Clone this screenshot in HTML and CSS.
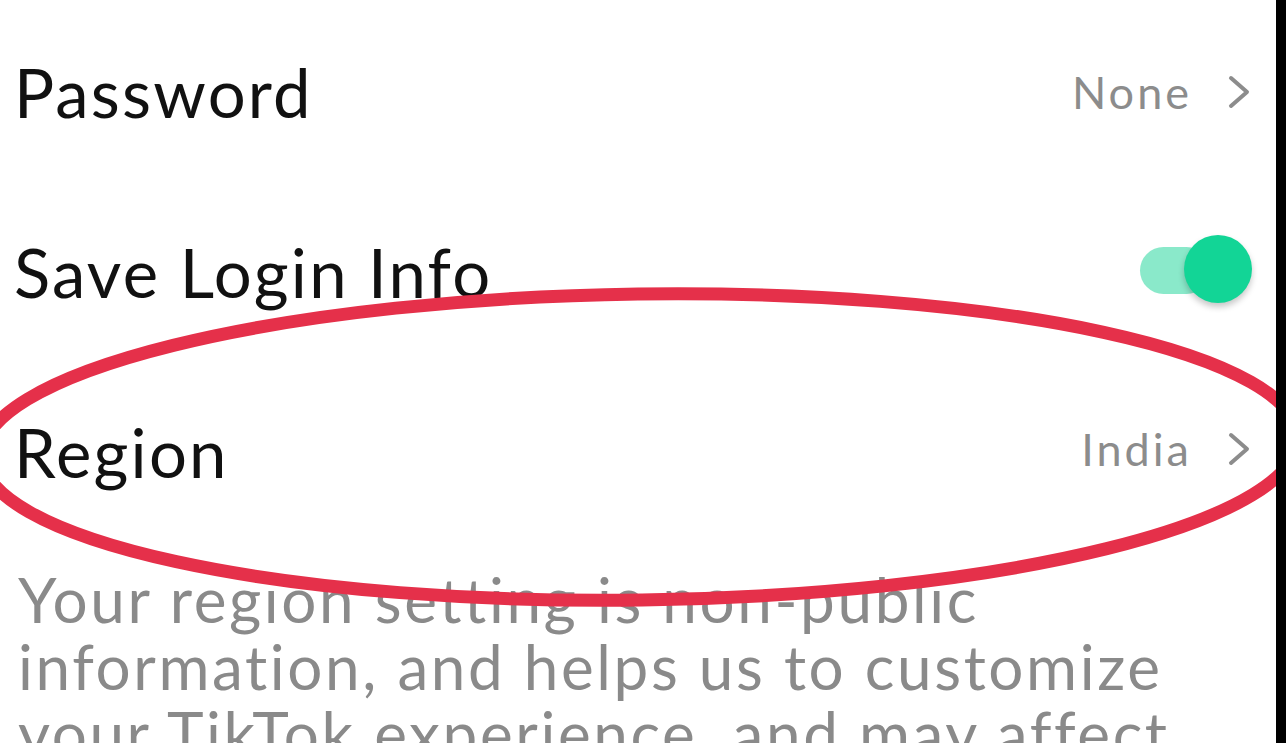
FILE: index.html
```html
<!DOCTYPE html>
<html>
<head>
<meta charset="utf-8">
<link rel="stylesheet" href="styles.css">
</head>
<body>
<div class="frame">
  <div class="screen">
    <div class="row">
      <span class="label">Password</span>
      <span class="value">None<svg class="chev" viewBox="0 0 22 34"><path d="M3 3 L19 17 L3 31" /></svg></span>
    </div>
    <div class="row">
      <span class="label">Save Login Info</span>
      <span class="toggle"><span class="track"></span><span class="knob"></span></span>
    </div>
    <div class="row">
      <span class="label">Region</span>
      <span class="value india">India<svg class="chev" viewBox="0 0 22 34"><path d="M3 3 L19 17 L3 31" /></svg></span>
    </div>
    <p class="desc">Your region setting is non-public<br>information, and helps us to customize<br>your TikTok experience, and may affect</p>
    <svg class="circle" viewBox="0 0 1400 320">
      <ellipse cx="680" cy="157" rx="658" ry="153" transform="rotate(-0.8 680 157)" />
    </svg>
  </div>
  <div class="edge"></div>
</div>
</body>
</html>
```
FILE: styles.css
```css
html, body {
  margin: 0;
  padding: 0;
  background: #000;
}
.frame {
  display: flex;
  width: 1286px;
  height: 743px;
  overflow: hidden;
}
.screen {
  position: relative;
  width: 1276px;
  height: 743px;
  background: #fff;
  padding: 2px 26px 0 14px;
  box-sizing: border-box;
  font-family: "Lato", "Liberation Sans", sans-serif;
  overflow: hidden;
}
.edge {
  width: 10px;
  background: #000;
}
.row {
  height: 180px;
  display: flex;
  align-items: center;
  justify-content: space-between;
}
.label {
  font-size: 67px;
  color: #111;
  letter-spacing: 2.2px;
}
.value {
  display: flex;
  align-items: center;
  gap: 36px;
  font-size: 45px;
  color: #8c8c8c;
  letter-spacing: 3px;
}
.india {
  margin-top: -6px;
}
.chev {
  width: 22px;
  height: 34px;
  fill: none;
  stroke: #8c8c8c;
  stroke-width: 4;
  stroke-linecap: round;
  stroke-linejoin: round;
}
.toggle {
  position: relative;
  width: 112px;
  height: 70px;
  margin-right: -2px;
  margin-top: -4px;
}
.track {
  position: absolute;
  left: 0;
  top: 12px;
  width: 70px;
  height: 47px;
  border-radius: 24px;
  background: #8ae9ca;
}
.knob {
  position: absolute;
  right: 0;
  top: 0;
  width: 68px;
  height: 68px;
  border-radius: 50%;
  background: #12d596;
  box-shadow: 0 4px 6px rgba(0, 0, 0, 0.22);
}
.desc {
  margin: 24px 0 0 4px;
  font-size: 62px;
  line-height: 67px;
  color: #8a8a8a;
  letter-spacing: 2.6px;
  white-space: nowrap;
}
.circle {
  position: absolute;
  left: -40px;
  top: 290px;
  width: 1400px;
  height: 320px;
  overflow: visible;
  pointer-events: none;
}
.circle ellipse {
  fill: none;
  stroke: #e5304a;
  stroke-width: 13;
}
```
